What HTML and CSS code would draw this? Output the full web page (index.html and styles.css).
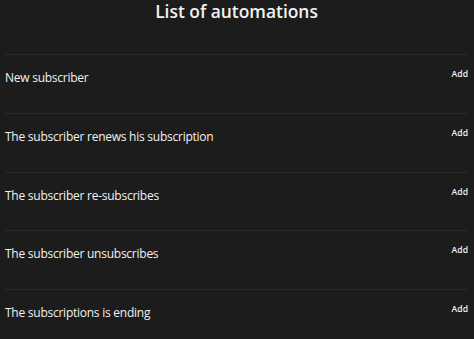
FILE: index.html
```html
<!DOCTYPE html>
<html lang="en">

<head>
    <meta charset="UTF-8">
    <meta name="viewport" content="width=device-width, initial-scale=1.0">
    <title>List of automations</title>
    <link rel="stylesheet" href="styles.css">
</head>

<body>
    <div class="container">
        <h1>List of automations</h1>
        <ul class="automations">
            <li class="automation">
                <span class="automation-name">New subscriber</span>
                <button class="add-btn">Add</button>
            </li>
            <li class="automation">
                <span class="automation-name">The subscriber renews his subscription</span>
                <button class="add-btn">Add</button>
            </li>
            <li class="automation">
                <span class="automation-name">The subscriber re-subscribes</span>
                <button class="add-btn">Add</button>
            </li>
            <li class="automation">
                <span class="automation-name">The subscriber unsubscribes</span>
                <button class="add-btn">Add</button>
            </li>
            <li class="automation">
                <span class="automation-name">The subscriptions is ending</span>
                <button class="add-btn">Add</button>
            </li>
        </ul>
    </div>
</body>

</html>
```

FILE: styles.css
```css
body {
    margin: 0;
    background: #1c1c1c;
    color: #f2f2f2;
    font-family: "Open Sans", sans-serif;
}

.container {
    padding: 0 6px 0 5px;
}

h1 {
    margin: 0;
    height: 54px;
    font-size: 17.4px;
    font-weight: 600;
    text-align: center;
    line-height: 22px;
}

.automations {
    list-style: none;
    margin: 0;
    padding: 0;
}

.automation {
    display: flex;
    justify-content: space-between;
    align-items: flex-start;
    height: 57.75px;
    border-top: 1px solid #2a2a2a;
}

.automation-name {
    margin-top: 15px;
    font-size: 12px;
    letter-spacing: -0.25px;
    line-height: 16px;
}

.add-btn {
    margin-top: 13px;
    padding: 0;
    border: none;
    background: none;
    color: #f2f2f2;
    font-family: inherit;
    font-size: 8.6px;
    font-weight: 600;
    line-height: 12px;
}
```
